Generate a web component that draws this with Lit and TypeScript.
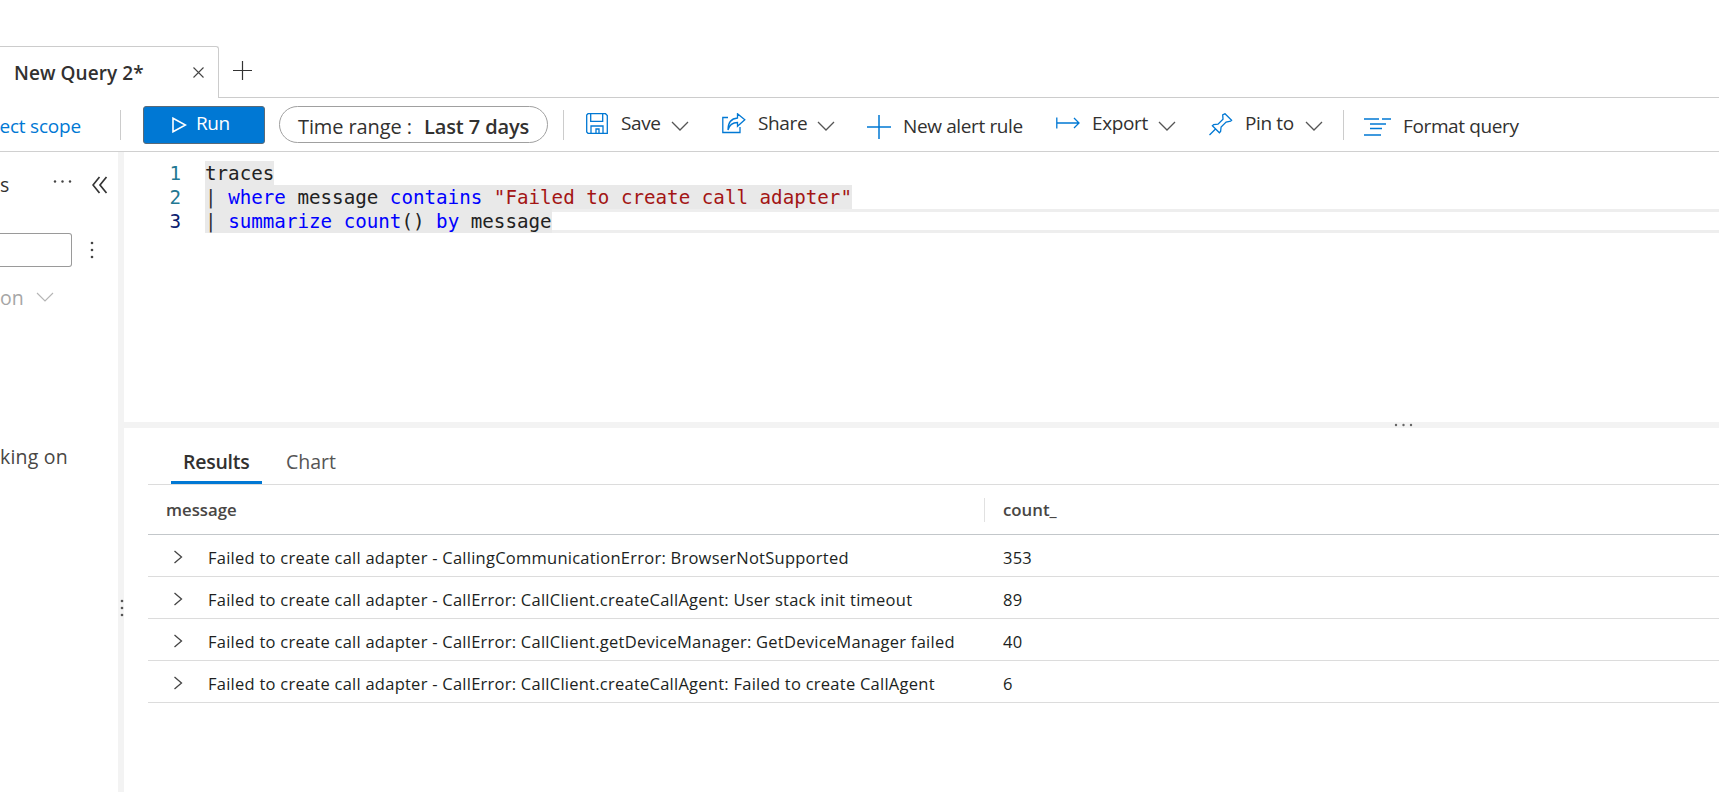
import { LitElement, html, css, svg } from "lit";
import { customElement } from "lit/decorators.js";

const chev = html`<svg class="chev" viewBox="0 0 18 10"><path d="M1 1l8 8 8-8"/></svg>`;
const rows = [
  ["Failed to create call adapter - CallingCommunicationError: BrowserNotSupported", "353"],
  ["Failed to create call adapter - CallError: CallClient.createCallAgent: User stack init timeout", "89"],
  ["Failed to create call adapter - CallError: CallClient.getDeviceManager: GetDeviceManager failed", "40"],
  ["Failed to create call adapter - CallError: CallClient.createCallAgent: Failed to create CallAgent", "6"],
];
const dots = svg`<circle cx="2" cy="2" r="1.2"/><circle cx="9.5" cy="2" r="1.2"/><circle cx="17" cy="2" r="1.2"/>`;

@customElement("app-root")
export class AppRoot extends LitElement {
  static styles = css`
    :host { display: block; height: 100vh; overflow: hidden; background: #fff; font-family: "Open Sans", "Noto Sans", sans-serif; color: #323130; }
    * { box-sizing: border-box; }
    svg { display: block; flex: none; fill: none; }
    .tabs { display: flex; padding-top: 46px; }
    .tab { width: 219px; height: 52px; background: #fff; border-top: 1px solid #ccc; border-right: 1px solid #ccc; border-top-right-radius: 3px; display: flex; align-items: center; padding-left: 14px; }
    .tab-title { font-size: 19px; font-weight: 600; letter-spacing: 0.08px; width: 180px; color: #323130; padding-top: 1px; }
    .close { width: 11px; height: 11px; stroke: #444; stroke-width: 1.1; margin-left: -1px; }
    .fill { flex: 1; height: 52px; border-bottom: 1px solid #ccc; padding: 15px 0 0 14px; }
    .plus { width: 19px; height: 19px; stroke: #333; stroke-width: 1.2; }

    .toolbar { height: 54px; border-bottom: 1.5px solid #d0d0d0; display: flex; align-items: center; }
    .scope { width: 81px; flex: none; overflow: hidden; display: flex; justify-content: flex-end; color: #0078d4; font-size: 19px; letter-spacing: -0.2px; white-space: nowrap; padding-top: 3px; }
    .sep { width: 1px; height: 30px; background: #ccc; flex: none; }
    .s1 { margin-left: 39px; } .s2 { margin-left: 15px; } .s3 { margin-left: 20px; }
    .run { margin-left: 22px; width: 122px; height: 38px; background: #0078d4; border: 1px solid #5a6a78; border-radius: 3px; display: flex; align-items: center; padding-left: 28px; color: #fff; font-size: 19px; letter-spacing: -0.4px; gap: 9px; }
    .run span { padding-bottom: 3px; }
    .run svg { width: 15px; height: 16px; stroke: #fff; stroke-width: 1.6; }
    .pill { margin-left: 14px; width: 269px; height: 37px; border: 1px solid #a0a0a0; border-radius: 19px; display: flex; align-items: center; padding: 3px 0 0 18px; font-size: 20px; letter-spacing: -0.1px; white-space: nowrap; color: #323130; }
    .pill b { font-weight: 600; margin-left: 12px; letter-spacing: -0.1px; }
    .item { display: flex; align-items: center; flex: none; font-size: 19px; letter-spacing: -0.37px; white-space: nowrap; color: #323130; }
    .item .ic { width: 24px; height: 24px; stroke: #0078d4; stroke-width: 1.3; }
    .item .lab { margin-left: 12px; padding-bottom: 3px; }
    .i-save .lab { margin-left: 11px; }
    .low .lab { padding-top: 3px; padding-bottom: 0; }
    .chev { width: 18px; height: 10px; stroke: #555; stroke-width: 1.3; margin-left: auto; margin-top: 3px; }
    .i-save { margin-left: 22px; width: 103px; }
    .i-share { margin-left: 33px; width: 113px; }
    .i-alert { margin-left: 32px; width: 157px; }
    .i-export { margin-left: 32px; width: 120px; }
    .i-pin { margin-left: 33px; width: 114px; }
    .i-format { margin-left: 20px; }
    .item .fmt { width: 27px; height: 20px; margin-top: 4px; }
    .i-alert .ic { margin-top: 5px; stroke-width: 1.5; height: 26px; }
    .i-export .ic { margin-top: -3px; }

    .main { display: flex; height: 640px; }
    .side { width: 118px; flex: none; overflow: hidden; display: flex; flex-direction: column; font-size: 19.5px; color: #323130; }
    .side-top { height: 74px; display: flex; align-items: flex-start; padding-top: 21px; }
    .side-s { width: 53px; line-height: 24px; }
    .more { width: 20px; height: 5px; margin-top: 6px; fill: #444; }
    .dbl { width: 16px; height: 18px; margin: 3px 0 0 19px; stroke: #333; stroke-width: 1.7; }
    .search { display: flex; align-items: center; height: 34px; margin-top: 7px; }
    .box { width: 72px; height: 34px; border: 1px solid #9a9a9a; border-left: none; border-radius: 0 3px 3px 0; }
    .kebab { width: 4px; height: 18px; margin-left: 18px; fill: #444; }
    .group { display: flex; align-items: center; height: 24px; margin-top: 18px; color: #a6a6a6; }
    .group span { width: 36px; }
    .group svg { width: 18px; height: 10px; stroke: #b5b5b5; stroke-width: 1.1; }
    .hint { margin-top: 136px; letter-spacing: 0.2px; line-height: 24px; color: #484644; }

    .vsplit { width: 6px; flex: none; background: #f3f3f3; position: relative; }
    .vdots { position: absolute; left: 2px; top: 447px; width: 4px; height: 18px; fill: #555; }
    .right { flex: 1; min-width: 0; display: flex; flex-direction: column; }
    .editor { height: 270px; padding-top: 9px; font-family: "DejaVu Sans Mono", "Liberation Mono", monospace; font-size: 19.2px; }
    .line { display: flex; height: 24px; line-height: 25px; white-space: pre; }
    .num { width: 81px; padding-right: 24px; text-align: right; flex: none; }
    .n1 { color: #237893; } .n3 { color: #0b216f; }
    .code { background: #e9e9e9; height: 24px; color: #222; }
    .cur { flex: 1; height: 24px; border-top: 3px solid #eee; border-bottom: 3px solid #eee; }
    .kw { color: #0000ff; } .str { color: #a31515; } .pipe { color: #333; }
    .hsplit { height: 6px; background: #f3f3f3; flex: none; position: relative; }
    .hdots { position: absolute; left: 1270px; top: 1px; width: 20px; height: 4px; fill: #666; }
    .results { flex: 1; padding-left: 24px; }
    .rtabs { height: 57px; border-bottom: 1px solid #dcdcdc; display: flex; padding-left: 23px; font-size: 19.5px; }
    .rtab { height: 56px; padding: 20px 12px 0; line-height: 28px; }
    .rtab.on { font-weight: 600; border-bottom: 3px solid #0078d4; color: #323130; letter-spacing: -0.25px; width: 91px; white-space: nowrap; }
    .rtab.off { color: #555; margin-left: 12px; }
    .head { height: 50px; border-bottom: 1.5px solid #c3c7ca; display: flex; align-items: center; font-size: 16.8px; font-weight: 600; color: #484644; }
    .h1 { width: 836px; padding-left: 18px; }
    .hdiv { width: 1px; height: 24px; background: #e1e1e1; }
    .h2 { padding-left: 18px; }
    .row { height: 42px; padding-top: 3px; border-bottom: 1px solid #dcdcdc; display: flex; align-items: center; font-size: 16.5px; letter-spacing: 0.25px; color: #201f1e; white-space: nowrap; }
    .row svg { width: 10px; height: 14px; margin-left: 25px; stroke: #444; stroke-width: 1.3; }
    .msg { width: 795px; margin-left: 25px; }
  `;

  render() {
    return html`
      <div class="tabs">
        <div class="tab">
          <span class="tab-title">New Query 2*</span>
          <svg class="close" viewBox="0 0 11 11"><path d="M.5.5l10 10M10.5.5l-10 10"/></svg>
        </div>
        <div class="fill"><svg class="plus" viewBox="0 0 19 19"><path d="M9.500 0v19M0 9.500h19"/></svg></div>
      </div>
      <div class="toolbar">
        <div class="scope">ect scope</div>
        <div class="sep s1"></div>
        <div class="run"><svg viewBox="0 0 15 16"><path d="M1 1.200 13.500 8 1 14.800z"/></svg><span>Run</span></div>
        <div class="pill">Time range : <b>Last 7 days</b></div>
        <div class="sep s2"></div>
        <div class="item i-save">
          <svg class="ic" viewBox="0 0 24 24"><path d="M2 .7h17.500l1.800 1.800v17.800H2L.7 19V2zM4.700 1v7.300h12V1M5 20v-7h12v7M10 20v-4h3v4"/></svg>
          <span class="lab">Save</span>${chev}
        </div>
        <div class="item i-share">
          <svg class="ic" viewBox="0 0 24 24"><path d="M6 4.500H.8v15H18V14M15.500.8l7.300 6-7.300 6.400V9.500c-5 0-8 2-9.500 7.500 0-7 3.500-11.500 9.500-12z"/></svg>
          <span class="lab">Share</span>${chev}
        </div>
        <div class="item i-alert low">
          <svg class="ic" viewBox="0 0 24 26"><path d="M12 1v24M0 13h24"/></svg>
          <span class="lab">New alert rule</span>
        </div>
        <div class="item i-export">
          <svg class="ic" viewBox="0 0 24 24"><path d="M.8 6.500v11M1 12h22M18 7l5 5-5 5"/></svg>
          <span class="lab">Export</span>${chev}
        </div>
        <div class="item i-pin">
          <svg class="ic" viewBox="0 0 24 24"><path d="M16 .7l6.600 6.500-1 1-4.500.8-5 5-.5 4.500-1.200 1.300-7-7 1.300-1.200 4.300-.4 5-5-.3-4.300zM7 15.500.5 22"/></svg>
          <span class="lab">Pin to</span>${chev}
        </div>
        <div class="sep s3"></div>
        <div class="item i-format low">
          <svg class="ic fmt" viewBox="0 0 27 20"><path d="M0 2h15M18 2h9M6 7h16M6 11.500h12M0 18h17"/></svg>
          <span class="lab">Format query</span>
        </div>
      </div>
      <div class="main">
        <div class="side">
          <div class="side-top">
            <span class="side-s">s</span>
            <svg class="more" viewBox="0 0 20 4">${dots}</svg>
            <svg class="dbl" viewBox="0 0 16 18"><path d="M7.500 1 1 9l6.500 8M14.500 1 8 9l6.500 8"/></svg>
          </div>
          <div class="search">
            <div class="box"></div>
            <svg class="kebab" viewBox="0 0 4 18"><circle cx="2" cy="2" r="1.3"/><circle cx="2" cy="9" r="1.3"/><circle cx="2" cy="16" r="1.3"/></svg>
          </div>
          <div class="group"><span>on</span><svg viewBox="0 0 18 10"><path d="M1 1l8 8 8-8"/></svg></div>
          <div class="hint">king on</div>
        </div>
        <div class="vsplit">
          <svg class="vdots" viewBox="0 0 4 18"><circle cx="2" cy="2" r="1.3"/><circle cx="2" cy="9" r="1.3"/><circle cx="2" cy="16" r="1.3"/></svg>
        </div>
        <div class="right">
          <div class="editor">
            <div class="line"><span class="num n1">1</span><span class="code">traces</span></div>
            <div class="line"><span class="num n1">2</span><span class="code"><span class="pipe">|</span> <span class="kw">where</span> message <span class="kw">contains</span> <span class="str">"Failed to create call adapter"</span></span></div>
            <div class="line"><span class="num n3">3</span><span class="code"><span class="pipe">|</span> <span class="kw">summarize</span> <span class="kw">count</span>() <span class="kw">by</span> message</span><span class="cur"></span></div>
          </div>
          <div class="hsplit"><svg class="hdots" viewBox="0 0 20 4">${dots}</svg></div>
          <div class="results">
            <div class="rtabs">
              <div class="rtab on">Results</div>
              <div class="rtab off">Chart</div>
            </div>
            <div class="head"><span class="h1">message</span><span class="hdiv"></span><span class="h2">count_</span></div>
            ${rows.map(
              ([m, c]) => html`<div class="row"><svg viewBox="0 0 10 14"><path d="M1.500 1l7 6-7 6"/></svg><span class="msg">${m}</span><span>${c}</span></div>`
            )}
          </div>
        </div>
      </div>
    `;
  }
}
